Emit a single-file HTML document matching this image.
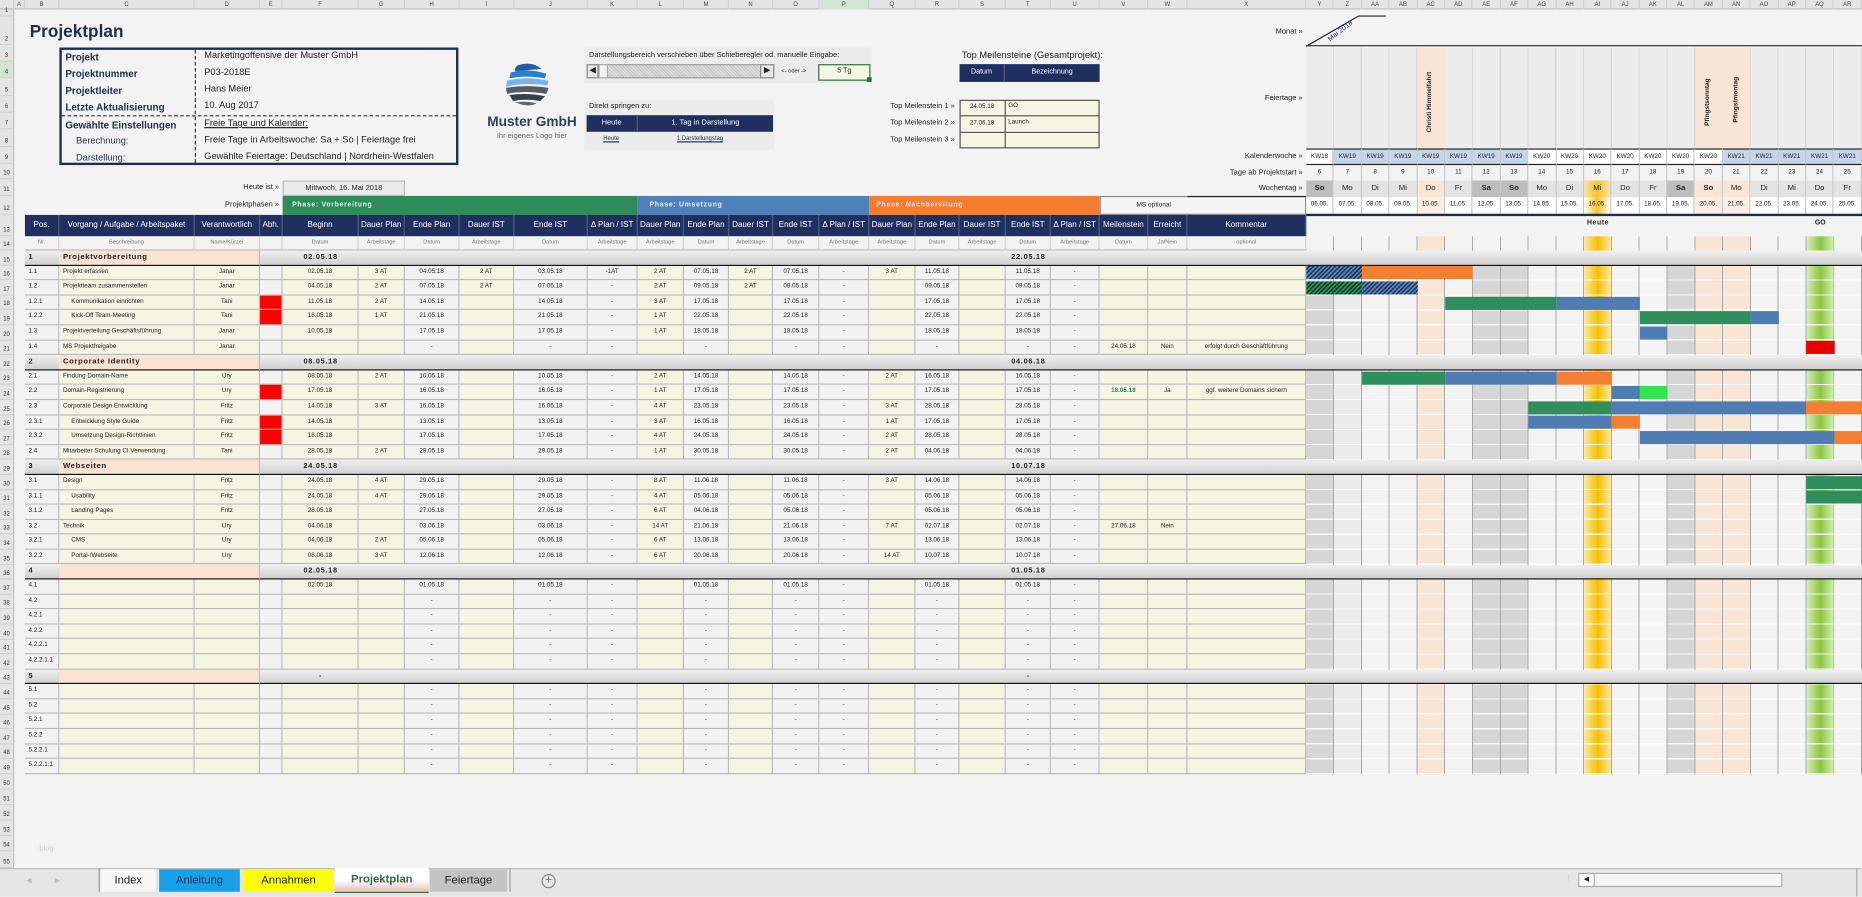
<!DOCTYPE html>
<html><head><meta charset="utf-8">
<style>
*{margin:0;padding:0;box-sizing:border-box}
html,body{width:1862px;height:896px;overflow:hidden;background:#f3f3f3}
#s{position:absolute;left:0;top:0;width:1568px;height:755px;transform:scale(1.1875);transform-origin:0 0;font-family:"Liberation Sans",sans-serif;color:#222;background:#f3f3f3;overflow:hidden}
.a{position:absolute}
.t{position:absolute;white-space:nowrap;line-height:1}
#ch{position:absolute;left:0;top:0;height:8px;display:flex;background:#e4e4e4;border-bottom:1px solid #bdbdbd}
#ch div{height:8px;font-size:5px;line-height:8px;text-align:center;border-right:1px solid #cfcfcf;color:#444;flex:none}
.rh{position:absolute;left:0;width:12px;background:#e4e4e4;border-bottom:1px solid #d0d0d0;border-right:1px solid #bdbdbd;font-size:5px;color:#333;display:flex;align-items:flex-end;justify-content:center;padding-bottom:1px}
#g{position:absolute;left:21px;top:181px;display:grid;grid-template-columns:29px 114px 55px 19px 64px 39px 46px 46px 62px 42px 39px 38px 37px 39px 42px 39px 37px 39px 38px 41px 41px 33px 100px;grid-template-rows:18px 12px repeat(35,12.6px)}
#g>div{border-right:1px solid #b9b9b9;border-bottom:1px solid #b9b9b9;font-size:5.3px;line-height:11.6px;text-align:center;overflow:hidden;white-space:nowrap;background:#f2f2f2}
#g>div.h{background:#1f3060;color:#fff;font-size:6.8px;line-height:17px;border-right:1px solid #4a5a85;border-bottom:none}
#g>div.s{background:#f3f3f3;color:#777;font-size:4.8px;line-height:11px;border-right:1px solid #d0d0d0}
#g>div.c{background:#f5f5e3}
#g>div.l{text-align:left;padding-left:3px}
#g>div.l2{text-align:left;padding-left:10px}
#g>div.r{background:#f00}
#g>div.gr{background:linear-gradient(#f0f0f0,#cfcfcf);border-bottom:1.6px solid #111;border-right:none;font-weight:bold;font-size:6.2px;letter-spacing:.6px}
#g>div.gp{background:#fbe3d4;border-bottom:1.6px solid #111;text-align:left;padding-left:3px;font-weight:bold;font-size:6.5px;letter-spacing:.5px}
#g>div.ms{color:#2e8b57;font-weight:bold}
.bar{position:absolute;height:11px}
.gn{background:#2f8f5c}.bl{background:#4f7db3}.or{background:#f47f30}.rd{background:#e80000}.lm{background:#33e54d}
.hb{background:repeating-linear-gradient(135deg,#5b86bd 0 1.4px,#1f3050 1.4px 2.6px)}
.hg{background:repeating-linear-gradient(135deg,#2f8f5c 0 1.4px,#123820 1.4px 2.6px)}
#gh{position:absolute;left:1100px;top:125px;display:grid;grid-template-columns:repeat(20,23.4px);grid-template-rows:14px 13px 14px 14px}
#gh>div{font-size:5.3px;text-align:center;line-height:13px;border-right:1px solid #c8c8c8}
.kw{border-top:1.3px solid #222;border-bottom:1.3px solid #222;background:#fff}
.kb{background:#c7d5ea!important}
.wd{background:#e3e3e3;font-size:6.5px!important}
.we{background:#bdbdbd;font-weight:bold}
.dt{background:#fff}
.nv{background:#1f3060;color:#fff}
</style></head><body><div id="s">

<!-- column header -->
<div id="ch">
<div style="width:12px"></div><div style="width:9px">A</div><div style="width:29px">B</div><div style="width:114px">C</div><div style="width:55px">D</div><div style="width:19px">E</div><div style="width:64px">F</div><div style="width:39px">G</div><div style="width:46px">H</div><div style="width:46px">I</div><div style="width:62px">J</div><div style="width:42px">K</div><div style="width:39px">L</div><div style="width:38px">M</div><div style="width:37px">N</div><div style="width:39px">O</div><div style="width:42px;background:#d4e3d4">P</div><div style="width:39px">Q</div><div style="width:37px">R</div><div style="width:39px">S</div><div style="width:38px">T</div><div style="width:41px">U</div><div style="width:41px">V</div><div style="width:33px">W</div><div style="width:100px">X</div><div style="width:23.4px">Y</div><div style="width:23.4px">Z</div><div style="width:23.4px">AA</div><div style="width:23.4px">AB</div><div style="width:23.4px">AC</div><div style="width:23.4px">AD</div><div style="width:23.4px">AE</div><div style="width:23.4px">AF</div><div style="width:23.4px">AG</div><div style="width:23.4px">AH</div><div style="width:23.4px">AI</div><div style="width:23.4px">AJ</div><div style="width:23.4px">AK</div><div style="width:23.4px">AL</div><div style="width:23.4px">AM</div><div style="width:23.4px">AN</div><div style="width:23.4px">AO</div><div style="width:23.4px">AP</div><div style="width:23.4px">AQ</div><div style="width:23.4px">AR</div>
</div>

<!-- row headers -->
<div class="rh" style="top:8px;height:6px">1</div><div class="rh" style="top:14px;height:24px">2</div><div class="rh" style="top:38px;height:14px">3</div><div class="rh" style="top:52px;height:14px;background:#d4e3d4">4</div><div class="rh" style="top:66px;height:15px">5</div><div class="rh" style="top:81px;height:14px">6</div><div class="rh" style="top:95px;height:14px">7</div><div class="rh" style="top:109px;height:15px">8</div><div class="rh" style="top:124px;height:14px">9</div><div class="rh" style="top:138px;height:13px">10</div><div class="rh" style="top:151px;height:14px">11</div><div class="rh" style="top:165px;height:16px">12</div><div class="rh" style="top:181px;height:18px">13</div><div class="rh" style="top:199px;height:12px">14</div>
<div class="rh" style="top:211px;height:12.6px">15</div><div class="rh" style="top:223.6px;height:12.6px">16</div><div class="rh" style="top:236.2px;height:12.6px">17</div><div class="rh" style="top:248.8px;height:12.6px">18</div><div class="rh" style="top:261.4px;height:12.6px">19</div><div class="rh" style="top:274px;height:12.6px">20</div><div class="rh" style="top:286.6px;height:12.6px">21</div><div class="rh" style="top:299.2px;height:12.6px">22</div><div class="rh" style="top:311.8px;height:12.6px">23</div><div class="rh" style="top:324.4px;height:12.6px">24</div><div class="rh" style="top:337px;height:12.6px">25</div><div class="rh" style="top:349.6px;height:12.6px">26</div><div class="rh" style="top:362.2px;height:12.6px">27</div><div class="rh" style="top:374.8px;height:12.6px">28</div><div class="rh" style="top:387.4px;height:12.6px">29</div><div class="rh" style="top:400px;height:12.6px">30</div><div class="rh" style="top:412.6px;height:12.6px">31</div><div class="rh" style="top:425.2px;height:12.6px">32</div><div class="rh" style="top:437.8px;height:12.6px">33</div><div class="rh" style="top:450.4px;height:12.6px">34</div><div class="rh" style="top:463px;height:12.6px">35</div><div class="rh" style="top:475.6px;height:12.6px">36</div><div class="rh" style="top:488.2px;height:12.6px">37</div><div class="rh" style="top:500.8px;height:12.6px">38</div><div class="rh" style="top:513.4px;height:12.6px">39</div><div class="rh" style="top:526px;height:12.6px">40</div><div class="rh" style="top:538.6px;height:12.6px">41</div><div class="rh" style="top:551.2px;height:12.6px">42</div><div class="rh" style="top:563.8px;height:12.6px">43</div><div class="rh" style="top:576.4px;height:12.6px">44</div><div class="rh" style="top:589px;height:12.6px">45</div><div class="rh" style="top:601.6px;height:12.6px">46</div><div class="rh" style="top:614.2px;height:12.6px">47</div><div class="rh" style="top:626.8px;height:12.6px">48</div><div class="rh" style="top:639.4px;height:12.6px">49</div>
<div class="rh" style="top:652px;height:13px">50</div><div class="rh" style="top:665px;height:13px">51</div><div class="rh" style="top:678px;height:13px">52</div><div class="rh" style="top:691px;height:13px">53</div><div class="rh" style="top:704px;height:13px">54</div><div class="rh" style="top:717px;height:14px">55</div>

<!-- title & info box -->
<div class="t" style="left:25px;top:20px;font-size:14.5px;font-weight:bold;color:#1f2d4e">Projektplan</div>
<div class="a" style="left:50px;top:40px;width:336px;height:99px;border:2px solid #1f2d4e"></div>
<div class="a" style="left:164px;top:42px;height:95px;border-left:1px dashed #333"></div>
<div class="a" style="left:52px;top:97px;width:332px;border-top:1px dashed #333"></div>
<div class="t" style="left:55px;top:44px;font-size:8.3px;font-weight:bold;color:#1f2d4e">Projekt</div>
<div class="t" style="left:55px;top:58px;font-size:8.3px;font-weight:bold;color:#1f2d4e">Projektnummer</div>
<div class="t" style="left:55px;top:72px;font-size:8.3px;font-weight:bold;color:#1f2d4e">Projektleiter</div>
<div class="t" style="left:55px;top:86px;font-size:8.3px;font-weight:bold;color:#1f2d4e">Letzte Aktualisierung</div>
<div class="t" style="left:55px;top:101px;font-size:8.3px;font-weight:bold;color:#1f2d4e">Gewählte Einstellungen</div>
<div class="t" style="left:64px;top:115px;font-size:7.8px;color:#1f2d4e">Berechnung:</div>
<div class="t" style="left:64px;top:129px;font-size:7.8px;color:#1f2d4e">Darstellung:</div>
<div class="t" style="left:172px;top:43px;font-size:7.8px">Marketingoffensive der Muster GmbH</div>
<div class="t" style="left:172px;top:57px;font-size:7.8px">P03-2018E</div>
<div class="t" style="left:172px;top:71px;font-size:7.8px">Hans Meier</div>
<div class="t" style="left:172px;top:85px;font-size:7.8px">10. Aug 2017</div>
<div class="t" style="left:172px;top:100px;font-size:7.8px;text-decoration:underline">Freie Tage und Kalender:</div>
<div class="t" style="left:172px;top:114px;font-size:7.8px">Freie Tage in Arbeitswoche: Sa + So | Feiertage frei</div>
<div class="t" style="left:172px;top:128px;font-size:7.8px">Gewählte Feiertage: Deutschland | Nordrhein-Westfalen</div>

<!-- logo -->
<svg class="a" style="left:418px;top:52px" width="48" height="38" viewBox="0 0 48 38">
<path d="M18 3 Q30 -1 38 6 L16 8 Q15 5 18 3Z" fill="#1f5fa8"/>
<path d="M12 9 Q26 5 42 10 L41 14 Q25 11 11 14Z" fill="#2b7fd0"/>
<path d="M9 16 Q25 12 44 16 L43 20 Q25 17 8 21Z" fill="#7ab4e8"/>
<path d="M8 22 Q25 19 44 22 L42 27 Q24 24 9 27Z" fill="#555c66"/>
<path d="M11 28 Q26 26 41 29 L37 33 Q24 31 14 33Z" fill="#3a3f47"/>
<path d="M16 34 Q26 33 34 35 Q26 39 16 34Z" fill="#666"/>
</svg>
<div class="t" style="left:400px;top:98px;width:96px;text-align:center;font-size:11.5px;font-weight:bold;color:#2f3d5f">Muster GmbH</div>
<div class="t" style="left:400px;top:112px;width:96px;text-align:center;font-size:6.3px;color:#666">Ihr eigenes Logo hier</div>

<!-- Darstellung widgets -->
<div class="a" style="left:492px;top:40px;width:242px;height:30px;background:#ececec"></div>
<div class="t" style="left:496px;top:44px;font-size:6.3px">Darstellungsbereich verschieben über Schieberegler od. manuelle Eingabe:</div>
<div class="a" style="left:494px;top:54px;width:158px;height:12px;background:repeating-linear-gradient(45deg,#ddd 0 1px,#c8c8c8 1px 2px);border:1px solid #999"></div>
<div class="a" style="left:494px;top:54px;width:10px;height:12px;background:#e8e8e8;border:1px solid #888;font-size:7px;line-height:10px;text-align:center">◀</div>
<div class="a" style="left:504px;top:54px;width:8px;height:12px;background:#f2f2f2;border:1px solid #aaa"></div>
<div class="a" style="left:640px;top:54px;width:12px;height:12px;background:#e8e8e8;border:1px solid #888;font-size:7px;line-height:10px;text-align:center">▶</div>
<div class="t" style="left:658px;top:59px;font-size:4.8px">&lt;- oder -&gt;</div>
<div class="a" style="left:689px;top:54px;width:44px;height:14px;border:1.5px solid #2e6e44;background:#f5f5e3;font-size:6px;line-height:11px;text-align:center">5 Tg</div>
<div class="a" style="left:730px;top:65px;width:4px;height:4px;background:#2e6e44"></div>
<div class="a" style="left:492px;top:84px;width:160px;height:42px;background:#ececec"></div>
<div class="t" style="left:496px;top:87px;font-size:6.3px">Direkt springen zu:</div>
<div class="a nv" style="left:494px;top:97px;width:43px;height:14px;font-size:6.3px;line-height:14px;text-align:center;border-right:1px solid #556">Heute</div>
<div class="a nv" style="left:537px;top:97px;width:114px;height:14px;font-size:6.3px;line-height:14px;text-align:center">1. Tag in Darstellung</div>
<div class="t" style="left:508px;top:115px;font-size:5px;text-decoration:underline;color:#1f3060">Heute</div>
<div class="t" style="left:570px;top:115px;font-size:5px;text-decoration:underline;color:#1f3060">1.Darstellungstag</div>

<!-- Top Meilensteine -->
<div class="t" style="left:810px;top:43px;font-size:7.8px">Top Meilensteine (Gesamtprojekt):</div>
<div class="a nv" style="left:808px;top:54px;width:38px;height:15px;font-size:6px;line-height:15px;text-align:center;border-right:1px solid #556">Datum</div>
<div class="a nv" style="left:846px;top:54px;width:80px;height:15px;font-size:6px;line-height:15px;text-align:center">Bezeichnung</div>
<div class="t" style="left:700px;top:87px;width:104px;text-align:right;font-size:6.3px">Top Meilenstein 1 »</div>
<div class="t" style="left:700px;top:101px;width:104px;text-align:right;font-size:6.3px">Top Meilenstein 2 »</div>
<div class="t" style="left:700px;top:115px;width:104px;text-align:right;font-size:6.3px">Top Meilenstein 3 »</div>
<div class="a" style="left:808px;top:84px;width:118px;height:41px;background:#f5f5e3;border:1px solid #555"></div>
<div class="a" style="left:846px;top:84px;height:41px;border-left:1px solid #555"></div>
<div class="a" style="left:808px;top:97px;width:118px;border-top:1px solid #555"></div>
<div class="a" style="left:808px;top:111px;width:118px;border-top:1px solid #555"></div>
<div class="t" style="left:808px;top:88px;width:38px;text-align:center;font-size:5.3px">24.05.18</div>
<div class="t" style="left:849px;top:87px;font-size:5.3px">GO</div>
<div class="t" style="left:808px;top:102px;width:38px;text-align:center;font-size:5.3px">27.06.18</div>
<div class="t" style="left:849px;top:101px;font-size:5.3px">Launch</div>

<!-- heute / phasen -->
<div class="t" style="left:150px;top:155px;width:85px;text-align:right;font-size:6.3px">Heute ist »</div>
<div class="a" style="left:238px;top:152px;width:103px;height:13px;background:#ebebeb;border:1px solid #bbb;font-size:6.3px;line-height:11px;text-align:center">Mittwoch, 16. Mai 2018</div>
<div class="t" style="left:150px;top:170px;width:85px;text-align:right;font-size:6.3px">Projektphasen »</div>
<div class="a" style="left:238px;top:165px;width:299px;height:16px;background:#2e8b5a;color:#e8f5e8;font-size:5.8px;font-weight:bold;line-height:16px;padding-left:8px;letter-spacing:.6px">Phase: Vorbereitung</div>
<div class="a" style="left:537px;top:165px;width:195px;height:16px;background:#5080b8;color:#e8eef8;font-size:5.8px;font-weight:bold;line-height:16px;padding-left:10px;letter-spacing:.6px">Phase: Umsetzung</div>
<div class="a" style="left:732px;top:165px;width:194px;height:16px;background:#f47d2f;color:#fde;font-size:5.8px;font-weight:bold;line-height:16px;padding-left:6px;letter-spacing:.6px">Phase: Nachbereitung</div>
<div class="a" style="left:926px;top:165px;width:174px;height:16px;background:#f5f5f5;border:1px solid #888;font-size:5.5px;line-height:14px;padding-left:30px">MS optional</div>

<!-- main grid -->
<div id="g">
<div class="h">Pos.</div><div class="h">Vorgang / Aufgabe / Arbeitspaket</div><div class="h">Verantwortlich</div><div class="h">Abh.</div><div class="h">Beginn</div><div class="h">Dauer Plan</div><div class="h">Ende Plan</div><div class="h">Dauer IST</div><div class="h">Ende IST</div><div class="h">Δ Plan / IST</div><div class="h">Dauer Plan</div><div class="h">Ende Plan</div><div class="h">Dauer IST</div><div class="h">Ende IST</div><div class="h">Δ Plan / IST</div><div class="h">Dauer Plan</div><div class="h">Ende Plan</div><div class="h">Dauer IST</div><div class="h">Ende IST</div><div class="h">Δ Plan / IST</div><div class="h">Meilenstein</div><div class="h">Erreicht</div><div class="h">Kommentar</div>
<div class="s">Nr.</div><div class="s">Beschreibung</div><div class="s">Name/Kürzel</div><div class="s"></div><div class="s">Datum</div><div class="s">Arbeitstage</div><div class="s">Datum</div><div class="s">Arbeitstage</div><div class="s">Datum</div><div class="s">Arbeitstage</div><div class="s">Arbeitstage</div><div class="s">Datum</div><div class="s">Arbeitstage</div><div class="s">Datum</div><div class="s">Arbeitstage</div><div class="s">Arbeitstage</div><div class="s">Datum</div><div class="s">Arbeitstage</div><div class="s">Datum</div><div class="s">Arbeitstage</div><div class="s">Datum</div><div class="s">Ja/Nein</div><div class="s">optional</div>
<!-- 15 -->
<div class="gr l">1</div><div class="gp" style="grid-column:span 2">Projektvorbereitung</div><div class="gr"></div><div class="gr">02.05.18</div><div class="gr" style="grid-column:span 13"></div><div class="gr">22.05.18</div><div class="gr" style="grid-column:span 4"></div>
<!-- 16 -->
<div class="l">1.1</div><div class="c l">Projekt erfassen</div><div class="c">Janar</div><div></div><div class="c">02.05.18</div><div class="c">3 AT</div><div>04.05.18</div><div class="c">2 AT</div><div>03.05.18</div><div>-1AT</div><div class="c">2 AT</div><div>07.05.18</div><div class="c">2 AT</div><div>07.05.18</div><div>-</div><div class="c">3 AT</div><div>11.05.18</div><div class="c"></div><div>11.05.18</div><div>-</div><div class="c"></div><div class="c"></div><div class="c"></div>
<!-- 17 -->
<div class="l">1.2</div><div class="c l">Projektteam zusammenstellen</div><div class="c">Janar</div><div></div><div class="c">04.05.18</div><div class="c">2 AT</div><div>07.05.18</div><div class="c">2 AT</div><div>07.05.18</div><div>-</div><div class="c">2 AT</div><div>09.05.18</div><div class="c">2 AT</div><div>09.05.18</div><div>-</div><div class="c"></div><div>09.05.18</div><div class="c"></div><div>09.05.18</div><div>-</div><div class="c"></div><div class="c"></div><div class="c"></div>
<!-- 18 -->
<div class="l">1.2.1</div><div class="c l2">Kommunikation einrichten</div><div class="c">Tani</div><div class="r"></div><div class="c">11.05.18</div><div class="c">2 AT</div><div>14.05.18</div><div class="c"></div><div>14.05.18</div><div>-</div><div class="c">3 AT</div><div>17.05.18</div><div class="c"></div><div>17.05.18</div><div>-</div><div class="c"></div><div>17.05.18</div><div class="c"></div><div>17.05.18</div><div>-</div><div class="c"></div><div class="c"></div><div class="c"></div>
<!-- 19 -->
<div class="l">1.2.2</div><div class="c l2">Kick-Off Team-Meeting</div><div class="c">Tani</div><div class="r"></div><div class="c">18.05.18</div><div class="c">1 AT</div><div>21.05.18</div><div class="c"></div><div>21.05.18</div><div>-</div><div class="c">1 AT</div><div>22.05.18</div><div class="c"></div><div>22.05.18</div><div>-</div><div class="c"></div><div>22.05.18</div><div class="c"></div><div>22.05.18</div><div>-</div><div class="c"></div><div class="c"></div><div class="c"></div>
<!-- 20 -->
<div class="l">1.3</div><div class="c l">Projektverteilung Geschäftsführung</div><div class="c">Janar</div><div></div><div class="c">10.05.18</div><div class="c"></div><div>17.05.18</div><div class="c"></div><div>17.05.18</div><div>-</div><div class="c">1 AT</div><div>18.05.18</div><div class="c"></div><div>18.05.18</div><div>-</div><div class="c"></div><div>18.05.18</div><div class="c"></div><div>18.05.18</div><div>-</div><div class="c"></div><div class="c"></div><div class="c"></div>
<!-- 21 -->
<div class="l">1.4</div><div class="c l">MS Projektfreigabe</div><div class="c">Janar</div><div></div><div class="c"></div><div class="c"></div><div>-</div><div class="c"></div><div>-</div><div>-</div><div class="c"></div><div>-</div><div class="c"></div><div>-</div><div>-</div><div class="c"></div><div>-</div><div class="c"></div><div>-</div><div>-</div><div class="c">24.05.18</div><div class="c">Nein</div><div class="c">erfolgt durch Geschäftführung</div>
<!-- 22 -->
<div class="gr l">2</div><div class="gp" style="grid-column:span 2">Corporate Identity</div><div class="gr"></div><div class="gr">08.05.18</div><div class="gr" style="grid-column:span 13"></div><div class="gr">04.06.18</div><div class="gr" style="grid-column:span 4"></div>
<!-- 23 -->
<div class="l">2.1</div><div class="c l">Findung Domain-Name</div><div class="c">Ury</div><div></div><div class="c">08.05.18</div><div class="c">2 AT</div><div>10.05.18</div><div class="c"></div><div>10.05.18</div><div>-</div><div class="c">2 AT</div><div>14.05.18</div><div class="c"></div><div>14.05.18</div><div>-</div><div class="c">2 AT</div><div>16.05.18</div><div class="c"></div><div>16.05.18</div><div>-</div><div class="c"></div><div class="c"></div><div class="c"></div>
<!-- 24 -->
<div class="l">2.2</div><div class="c l">Domain-Registrierung</div><div class="c">Ury</div><div class="r"></div><div class="c">17.05.18</div><div class="c"></div><div>16.05.18</div><div class="c"></div><div>16.05.18</div><div>-</div><div class="c">1 AT</div><div>17.05.18</div><div class="c"></div><div>17.05.18</div><div>-</div><div class="c"></div><div>17.05.18</div><div class="c"></div><div>17.05.18</div><div>-</div><div class="c ms">18.05.18</div><div class="c">Ja</div><div class="c">ggf. weitere Domains sichern</div>
<!-- 25 -->
<div class="l">2.3</div><div class="c l">Corporate Design Entwicklung</div><div class="c">Fritz</div><div></div><div class="c">14.05.18</div><div class="c">3 AT</div><div>16.05.18</div><div class="c"></div><div>16.05.18</div><div>-</div><div class="c">4 AT</div><div>23.05.18</div><div class="c"></div><div>23.05.18</div><div>-</div><div class="c">3 AT</div><div>28.05.18</div><div class="c"></div><div>28.05.18</div><div>-</div><div class="c"></div><div class="c"></div><div class="c"></div>
<!-- 26 -->
<div class="l">2.3.1</div><div class="c l2">Entwicklung Style Guide</div><div class="c">Fritz</div><div class="r"></div><div class="c">14.05.18</div><div class="c"></div><div>13.05.18</div><div class="c"></div><div>13.05.18</div><div>-</div><div class="c">3 AT</div><div>16.05.18</div><div class="c"></div><div>16.05.18</div><div>-</div><div class="c">1 AT</div><div>17.05.18</div><div class="c"></div><div>17.05.18</div><div>-</div><div class="c"></div><div class="c"></div><div class="c"></div>
<!-- 27 -->
<div class="l">2.3.2</div><div class="c l2">Umsetzung Design-Richtlinien</div><div class="c">Fritz</div><div class="r"></div><div class="c">18.05.18</div><div class="c"></div><div>17.05.18</div><div class="c"></div><div>17.05.18</div><div>-</div><div class="c">4 AT</div><div>24.05.18</div><div class="c"></div><div>24.05.18</div><div>-</div><div class="c">2 AT</div><div>28.05.18</div><div class="c"></div><div>28.05.18</div><div>-</div><div class="c"></div><div class="c"></div><div class="c"></div>
<!-- 28 -->
<div class="l">2.4</div><div class="c l">Mitarbeiter Schulung CI Verwendung</div><div class="c">Tani</div><div></div><div class="c">28.05.18</div><div class="c">2 AT</div><div>29.05.18</div><div class="c"></div><div>29.05.18</div><div>-</div><div class="c">1 AT</div><div>30.05.18</div><div class="c"></div><div>30.05.18</div><div>-</div><div class="c">2 AT</div><div>04.06.18</div><div class="c"></div><div>04.06.18</div><div>-</div><div class="c"></div><div class="c"></div><div class="c"></div>
<!-- 29 -->
<div class="gr l">3</div><div class="gp" style="grid-column:span 2">Webseiten</div><div class="gr"></div><div class="gr">24.05.18</div><div class="gr" style="grid-column:span 13"></div><div class="gr">10.07.18</div><div class="gr" style="grid-column:span 4"></div>
<!-- 30 -->
<div class="l">3.1</div><div class="c l">Design</div><div class="c">Fritz</div><div></div><div class="c">24.05.18</div><div class="c">4 AT</div><div>29.05.18</div><div class="c"></div><div>29.05.18</div><div>-</div><div class="c">8 AT</div><div>11.06.18</div><div class="c"></div><div>11.06.18</div><div>-</div><div class="c">3 AT</div><div>14.06.18</div><div class="c"></div><div>14.06.18</div><div>-</div><div class="c"></div><div class="c"></div><div class="c"></div>
<!-- 31 -->
<div class="l">3.1.1</div><div class="c l2">Usability</div><div class="c">Fritz</div><div></div><div class="c">24.05.18</div><div class="c">4 AT</div><div>29.05.18</div><div class="c"></div><div>29.05.18</div><div>-</div><div class="c">4 AT</div><div>05.06.18</div><div class="c"></div><div>05.06.18</div><div>-</div><div class="c"></div><div>05.06.18</div><div class="c"></div><div>05.06.18</div><div>-</div><div class="c"></div><div class="c"></div><div class="c"></div>
<!-- 32 -->
<div class="l">3.1.2</div><div class="c l2">Landing Pages</div><div class="c">Fritz</div><div></div><div class="c">28.05.18</div><div class="c"></div><div>27.05.18</div><div class="c"></div><div>27.05.18</div><div>-</div><div class="c">6 AT</div><div>04.06.18</div><div class="c"></div><div>05.06.18</div><div>-</div><div class="c"></div><div>05.06.18</div><div class="c"></div><div>05.06.18</div><div>-</div><div class="c"></div><div class="c"></div><div class="c"></div>
<!-- 33 -->
<div class="l">3.2</div><div class="c l">Technik</div><div class="c">Ury</div><div></div><div class="c">04.06.18</div><div class="c"></div><div>03.06.18</div><div class="c"></div><div>03.06.18</div><div>-</div><div class="c">14 AT</div><div>21.06.18</div><div class="c"></div><div>21.06.18</div><div>-</div><div class="c">7 AT</div><div>02.07.18</div><div class="c"></div><div>02.07.18</div><div>-</div><div class="c">27.06.18</div><div class="c">Nein</div><div class="c"></div>
<!-- 34 -->
<div class="l">3.2.1</div><div class="c l2">CMS</div><div class="c">Ury</div><div></div><div class="c">04.06.18</div><div class="c">2 AT</div><div>05.06.18</div><div class="c"></div><div>05.06.18</div><div>-</div><div class="c">6 AT</div><div>13.06.18</div><div class="c"></div><div>13.06.18</div><div>-</div><div class="c"></div><div>13.06.18</div><div class="c"></div><div>13.06.18</div><div>-</div><div class="c"></div><div class="c"></div><div class="c"></div>
<!-- 35 -->
<div class="l">3.2.2</div><div class="c l2">Portal-/Webseite</div><div class="c">Ury</div><div></div><div class="c">08.06.18</div><div class="c">3 AT</div><div>12.06.18</div><div class="c"></div><div>12.06.18</div><div>-</div><div class="c">6 AT</div><div>20.06.18</div><div class="c"></div><div>20.06.18</div><div>-</div><div class="c">14 AT</div><div>10.07.18</div><div class="c"></div><div>10.07.18</div><div>-</div><div class="c"></div><div class="c"></div><div class="c"></div>
<!-- 36 -->
<div class="gr l">4</div><div class="gp" style="grid-column:span 2"></div><div class="gr"></div><div class="gr">02.05.18</div><div class="gr" style="grid-column:span 13"></div><div class="gr">01.05.18</div><div class="gr" style="grid-column:span 4"></div>
<!-- 37 -->
<div class="l">4.1</div><div class="c"></div><div class="c"></div><div></div><div class="c">02.05.18</div><div class="c"></div><div>01.05.18</div><div class="c"></div><div>01.05.18</div><div>-</div><div class="c"></div><div>01.05.18</div><div class="c"></div><div>01.05.18</div><div>-</div><div class="c"></div><div>01.05.18</div><div class="c"></div><div>01.05.18</div><div>-</div><div class="c"></div><div class="c"></div><div class="c"></div>
<!-- 38-42 -->
<div class="l">4.2</div><div class="c"></div><div class="c"></div><div></div><div class="c"></div><div class="c"></div><div>-</div><div class="c"></div><div>-</div><div>-</div><div class="c"></div><div>-</div><div class="c"></div><div>-</div><div>-</div><div class="c"></div><div>-</div><div class="c"></div><div>-</div><div>-</div><div class="c"></div><div class="c"></div><div class="c"></div>
<div class="l">4.2.1</div><div class="c"></div><div class="c"></div><div></div><div class="c"></div><div class="c"></div><div>-</div><div class="c"></div><div>-</div><div>-</div><div class="c"></div><div>-</div><div class="c"></div><div>-</div><div>-</div><div class="c"></div><div>-</div><div class="c"></div><div>-</div><div>-</div><div class="c"></div><div class="c"></div><div class="c"></div>
<div class="l">4.2.2</div><div class="c"></div><div class="c"></div><div></div><div class="c"></div><div class="c"></div><div>-</div><div class="c"></div><div>-</div><div>-</div><div class="c"></div><div>-</div><div class="c"></div><div>-</div><div>-</div><div class="c"></div><div>-</div><div class="c"></div><div>-</div><div>-</div><div class="c"></div><div class="c"></div><div class="c"></div>
<div class="l">4.2.2.1</div><div class="c"></div><div class="c"></div><div></div><div class="c"></div><div class="c"></div><div>-</div><div class="c"></div><div>-</div><div>-</div><div class="c"></div><div>-</div><div class="c"></div><div>-</div><div>-</div><div class="c"></div><div>-</div><div class="c"></div><div>-</div><div>-</div><div class="c"></div><div class="c"></div><div class="c"></div>
<div class="l">4.2.2.1.1</div><div class="c"></div><div class="c"></div><div></div><div class="c"></div><div class="c"></div><div>-</div><div class="c"></div><div>-</div><div>-</div><div class="c"></div><div>-</div><div class="c"></div><div>-</div><div>-</div><div class="c"></div><div>-</div><div class="c"></div><div>-</div><div>-</div><div class="c"></div><div class="c"></div><div class="c"></div>
<!-- 43 -->
<div class="gr l">5</div><div class="gp" style="grid-column:span 2"></div><div class="gr"></div><div class="gr">-</div><div class="gr" style="grid-column:span 13"></div><div class="gr">-</div><div class="gr" style="grid-column:span 4"></div>
<!-- 44-49 -->
<div class="l">5.1</div><div class="c"></div><div class="c"></div><div></div><div class="c"></div><div class="c"></div><div>-</div><div class="c"></div><div>-</div><div>-</div><div class="c"></div><div>-</div><div class="c"></div><div>-</div><div>-</div><div class="c"></div><div>-</div><div class="c"></div><div>-</div><div>-</div><div class="c"></div><div class="c"></div><div class="c"></div>
<div class="l">5.2</div><div class="c"></div><div class="c"></div><div></div><div class="c"></div><div class="c"></div><div>-</div><div class="c"></div><div>-</div><div>-</div><div class="c"></div><div>-</div><div class="c"></div><div>-</div><div>-</div><div class="c"></div><div>-</div><div class="c"></div><div>-</div><div>-</div><div class="c"></div><div class="c"></div><div class="c"></div>
<div class="l">5.2.1</div><div class="c"></div><div class="c"></div><div></div><div class="c"></div><div class="c"></div><div>-</div><div class="c"></div><div>-</div><div>-</div><div class="c"></div><div>-</div><div class="c"></div><div>-</div><div>-</div><div class="c"></div><div>-</div><div class="c"></div><div>-</div><div>-</div><div class="c"></div><div class="c"></div><div class="c"></div>
<div class="l">5.2.2</div><div class="c"></div><div class="c"></div><div></div><div class="c"></div><div class="c"></div><div>-</div><div class="c"></div><div>-</div><div>-</div><div class="c"></div><div>-</div><div class="c"></div><div>-</div><div>-</div><div class="c"></div><div>-</div><div class="c"></div><div>-</div><div>-</div><div class="c"></div><div class="c"></div><div class="c"></div>
<div class="l">5.2.2.1</div><div class="c"></div><div class="c"></div><div></div><div class="c"></div><div class="c"></div><div>-</div><div class="c"></div><div>-</div><div>-</div><div class="c"></div><div>-</div><div class="c"></div><div>-</div><div>-</div><div class="c"></div><div>-</div><div class="c"></div><div>-</div><div>-</div><div class="c"></div><div class="c"></div><div class="c"></div>
<div class="l">5.2.2.1.1</div><div class="c"></div><div class="c"></div><div></div><div class="c"></div><div class="c"></div><div>-</div><div class="c"></div><div>-</div><div>-</div><div class="c"></div><div>-</div><div class="c"></div><div>-</div><div>-</div><div class="c"></div><div>-</div><div class="c"></div><div>-</div><div>-</div><div class="c"></div><div class="c"></div><div class="c"></div>
</div>

<!-- Gantt top header -->
<div class="t" style="left:1000px;top:24px;width:97px;text-align:right;font-size:6.3px">Monat »</div>
<svg class="a" style="left:1098px;top:10px" width="80" height="32"><path d="M2 29 L46 3.5 L69 3.5" stroke="#222" stroke-width="1" fill="none"/><text x="0" y="0" transform="translate(22 25) rotate(-38)" font-family="Liberation Sans" font-size="6" fill="#1f3060">Mai 2018</text></svg>
<div class="a" style="left:1100px;top:38px;width:468px;height:1.3px;background:#333"></div>
<div class="a" style="left:1100px;top:40px;width:468px;height:85px;background:repeating-linear-gradient(90deg,#ececec 0 22.4px,#d8d8d8 22.4px 23.4px)"></div>
<div class="a" style="left:1193.6px;top:40px;width:23.4px;height:85px;background:#f8e5d5"></div>
<div class="a" style="left:1427.6px;top:40px;width:46.8px;height:85px;background:#f8e5d5"></div>
<div class="t" style="left:1000px;top:80px;width:97px;text-align:right;font-size:6.3px">Feiertage »</div>
<div class="t" style="left:1205px;top:86px;transform:translate(-50%,-50%) rotate(-90deg);font-size:5.5px;font-weight:bold">Christi Himmelfahrt</div>
<div class="t" style="left:1439px;top:86px;transform:translate(-50%,-50%) rotate(-90deg);font-size:5.5px;font-weight:bold">Pfingstsonntag</div>
<div class="t" style="left:1463px;top:84px;transform:translate(-50%,-50%) rotate(-90deg);font-size:5.5px;font-weight:bold">Pfingstmontag</div>
<div class="t" style="left:1000px;top:129px;width:97px;text-align:right;font-size:6.3px">Kalenderwoche »</div>
<div class="t" style="left:1000px;top:143px;width:97px;text-align:right;font-size:6.3px">Tage ab Projektstart »</div>
<div class="t" style="left:1000px;top:156px;width:97px;text-align:right;font-size:6.3px">Wochentag »</div>
<div class="a" style="left:1000px;top:165px;width:100px;height:1.3px;background:#222"></div>
<div id="gh">
<div class="kw">KW18</div><div class="kw kb">KW19</div><div class="kw kb">KW19</div><div class="kw kb">KW19</div><div class="kw kb">KW19</div><div class="kw kb">KW19</div><div class="kw kb">KW19</div><div class="kw kb">KW19</div><div class="kw">KW20</div><div class="kw">KW20</div><div class="kw">KW20</div><div class="kw">KW20</div><div class="kw">KW20</div><div class="kw">KW20</div><div class="kw">KW20</div><div class="kw kb">KW21</div><div class="kw kb">KW21</div><div class="kw kb">KW21</div><div class="kw kb">KW21</div><div class="kw kb">KW21</div>
<div>6</div><div>7</div><div>8</div><div>9</div><div>10</div><div>11</div><div>12</div><div>13</div><div>14</div><div>15</div><div>16</div><div>17</div><div>18</div><div>19</div><div>20</div><div>21</div><div>22</div><div>23</div><div>24</div><div>25</div>
<div class="wd we">So</div><div class="wd">Mo</div><div class="wd">Di</div><div class="wd">Mi</div><div class="wd" style="background:#f8e5d5">Do</div><div class="wd">Fr</div><div class="wd we">Sa</div><div class="wd we">So</div><div class="wd">Mo</div><div class="wd">Di</div><div class="wd" style="background:linear-gradient(90deg,#f3e3b0,#f6c42a,#f3e3b0)">Mi</div><div class="wd">Do</div><div class="wd">Fr</div><div class="wd we">Sa</div><div class="wd" style="background:#f8e5d5;font-weight:bold">So</div><div class="wd" style="background:#f8e5d5">Mo</div><div class="wd">Di</div><div class="wd">Mi</div><div class="wd">Do</div><div class="wd">Fr</div>
<div class="dt">06.05.</div><div class="dt">07.05.</div><div class="dt">08.05.</div><div class="dt">09.05.</div><div class="dt" style="background:#fbeee3">10.05.</div><div class="dt">11.05.</div><div class="dt">12.05.</div><div class="dt">13.05.</div><div class="dt">14.05.</div><div class="dt">15.05.</div><div class="dt" style="background:linear-gradient(90deg,#fff,#f6c42a,#fff)">16.05.</div><div class="dt">17.05.</div><div class="dt">18.05.</div><div class="dt">19.05.</div><div class="dt" style="background:#fbeee3">20.05.</div><div class="dt" style="background:#fbeee3">21.05.</div><div class="dt">22.05.</div><div class="dt">23.05.</div><div class="dt">24.05.</div><div class="dt">25.05.</div>
</div>
<div class="a" style="left:1100px;top:180px;width:468px;height:2px;background:#1f2d4e"></div>
<div class="t" style="left:1334px;top:186px;width:23.4px;text-align:center;font-size:5.8px;font-weight:bold;letter-spacing:.5px">Heute</div>
<div class="t" style="left:1521.2px;top:186px;width:23.4px;text-align:center;font-size:5.8px;font-weight:bold">GO</div>
<div class="a" style="left:1193.6px;top:199px;width:23.4px;height:12px;background:#f8e5d5"></div>
<div class="a" style="left:1427.6px;top:199px;width:46.8px;height:12px;background:#f8e5d5"></div>
<div class="a" style="left:1334px;top:199px;width:23.4px;height:12px;background:linear-gradient(90deg,#fbe9a8,#f5c000 50%,#fbe9a8)"></div>
<div class="a" style="left:1521.2px;top:199px;width:23.4px;height:12px;background:linear-gradient(90deg,#d8efc0,#8cc63f 50%,#d8efc0)"></div>

<!-- Gantt body -->
<div class="a" style="left:1100px;top:211px;width:468px;height:441px;background:linear-gradient(90deg,#d6d6d6 0 23.4px,#ececec 23.4px 46.8px,#f3f3f3 46.8px 93.6px,#f8e5d5 93.6px 117px,#f3f3f3 117px 140.4px,#d6d6d6 140.4px 187.2px,#f3f3f3 187.2px 234px,#f3f3f3 234px 257.4px,#f3f3f3 257.4px 280.8px,#f5f5f5 280.8px 304.2px,#d6d6d6 304.2px 327.6px,#f8e5d5 327.6px 374.4px,#f3f3f3 374.4px 421.2px,#f3f3f3 421.2px 468px)"></div>
<div class="a" style="left:1334px;top:211px;width:23.4px;height:441px;background:linear-gradient(90deg,#fbe9a8,#f5c000 50%,#fbe9a8)"></div>
<div class="a" style="left:1521.2px;top:211px;width:23.4px;height:441px;background:linear-gradient(90deg,#d8efc0,#8cc63f 50%,#d8efc0)"></div>
<div class="a" style="left:1100px;top:211px;width:468px;height:441px;background:repeating-linear-gradient(to bottom,transparent 0 11.6px,rgba(255,255,255,.85) 11.6px 12.6px)"></div>
<div class="a" style="left:1100px;top:199px;width:468px;height:453px;background:repeating-linear-gradient(90deg,transparent 0 22.6px,#a8a8a8 22.6px 23.4px)"></div>
<div class="a" style="left:1100px;top:211px;width:468px;height:12.6px;background:linear-gradient(#f0f0f0,#cfcfcf);border-bottom:1.6px solid #111"></div>
<div class="a" style="left:1100px;top:299.2px;width:468px;height:12.6px;background:linear-gradient(#f0f0f0,#cfcfcf);border-bottom:1.6px solid #111"></div>
<div class="a" style="left:1100px;top:387.4px;width:468px;height:12.6px;background:linear-gradient(#f0f0f0,#cfcfcf);border-bottom:1.6px solid #111"></div>
<div class="a" style="left:1100px;top:475.6px;width:468px;height:12.6px;background:linear-gradient(#f0f0f0,#cfcfcf);border-bottom:1.6px solid #111"></div>
<div class="a" style="left:1100px;top:563.8px;width:468px;height:12.6px;background:linear-gradient(#f0f0f0,#cfcfcf);border-bottom:1.6px solid #111"></div>

<!-- bars -->
<div class="bar hb" style="left:1100px;top:224.4px;width:46.8px"></div>
<div class="bar or" style="left:1146.8px;top:224.4px;width:93.6px"></div>
<div class="bar hg" style="left:1100px;top:237px;width:46.8px"></div>
<div class="bar hb" style="left:1146.8px;top:237px;width:46.8px"></div>
<div class="bar gn" style="left:1217px;top:249.6px;width:93.6px"></div>
<div class="bar bl" style="left:1310.6px;top:249.6px;width:70.2px"></div>
<div class="bar gn" style="left:1380.8px;top:262.2px;width:93.6px"></div>
<div class="bar bl" style="left:1474.4px;top:262.2px;width:23.4px"></div>
<div class="bar bl" style="left:1380.8px;top:274.8px;width:23.4px"></div>
<div class="bar rd" style="left:1521.2px;top:287.4px;width:23.4px"></div>
<div class="bar gn" style="left:1146.8px;top:312.6px;width:70.2px"></div>
<div class="bar bl" style="left:1217px;top:312.6px;width:93.6px"></div>
<div class="bar or" style="left:1310.6px;top:312.6px;width:46.8px"></div>
<div class="bar bl" style="left:1357.4px;top:325.2px;width:23.4px"></div>
<div class="bar lm" style="left:1380.8px;top:325.2px;width:23.4px"></div>
<div class="bar gn" style="left:1287.2px;top:337.8px;width:70.2px"></div>
<div class="bar bl" style="left:1357.4px;top:337.8px;width:163.8px"></div>
<div class="bar or" style="left:1521.2px;top:337.8px;width:46.8px"></div>
<div class="bar bl" style="left:1287.2px;top:350.4px;width:70.2px"></div>
<div class="bar or" style="left:1357.4px;top:350.4px;width:23.4px"></div>
<div class="bar bl" style="left:1380.8px;top:363px;width:163.8px"></div>
<div class="bar or" style="left:1544.6px;top:363px;width:23.4px"></div>
<div class="bar gn" style="left:1521.2px;top:400.8px;width:46.8px"></div>
<div class="bar gn" style="left:1521.2px;top:413.4px;width:46.8px"></div>

<div class="t" style="left:33px;top:712px;font-size:6.5px;color:#ccc">blog</div>

<!-- tab bar -->
<div class="a" style="left:0;top:731px;width:1568px;height:24px;background:#e6e6e6;border-top:1px solid #bdbdbd"></div>
<div class="t" style="left:22px;top:739px;font-size:6px;color:#bbb">◀</div>
<div class="t" style="left:46px;top:739px;font-size:6px;color:#bbb">▶</div>
<div class="a" style="left:83px;top:731px;height:20px;border-left:1px solid #999"></div>
<div class="a" style="left:85px;top:732px;width:46px;height:19px;background:#f7f7f7;font-size:9.5px;line-height:19px;text-align:center">Index</div>
<div class="a" style="left:134px;top:732px;width:68px;height:19px;background:#17a2e8;color:#1f3060;font-size:9.5px;line-height:19px;text-align:center">Anleitung</div>
<div class="a" style="left:205px;top:732px;width:76px;height:19px;background:#ffff00;font-size:9.5px;line-height:19px;text-align:center">Annahmen</div>
<div class="a" style="left:282px;top:731px;width:79px;height:21px;background:linear-gradient(#fff 50%,#f2b8b8);border-bottom:1.5px solid #2f6f3a;color:#2f6f3a;font-weight:bold;font-size:9.5px;line-height:20px;text-align:center">Projektplan</div>
<div class="a" style="left:362px;top:732px;width:65px;height:19px;background:#c4c4c4;font-size:9.5px;line-height:19px;text-align:center">Feiertage</div>
<div class="a" style="left:429px;top:731px;height:20px;border-left:1px solid #999"></div>
<div class="a" style="left:456px;top:736px;width:12px;height:12px;border:1px solid #888;border-radius:50%;font-size:10px;line-height:10px;text-align:center;color:#777">+</div>
<div class="t" style="left:1318px;top:737px;font-size:6px;color:#bbb">⋮</div>
<div class="a" style="left:1329px;top:735px;width:172px;height:12px;border:1px solid #aaa;background:#f5f5f5"></div>
<div class="a" style="left:1329px;top:735px;width:14px;height:12px;border:1px solid #aaa;background:#fff;font-size:6px;line-height:10px;text-align:center">◀</div>
<div class="a" style="left:1563px;top:731px;height:24px;border-left:1px solid #aaa"></div>
</div></body></html>
